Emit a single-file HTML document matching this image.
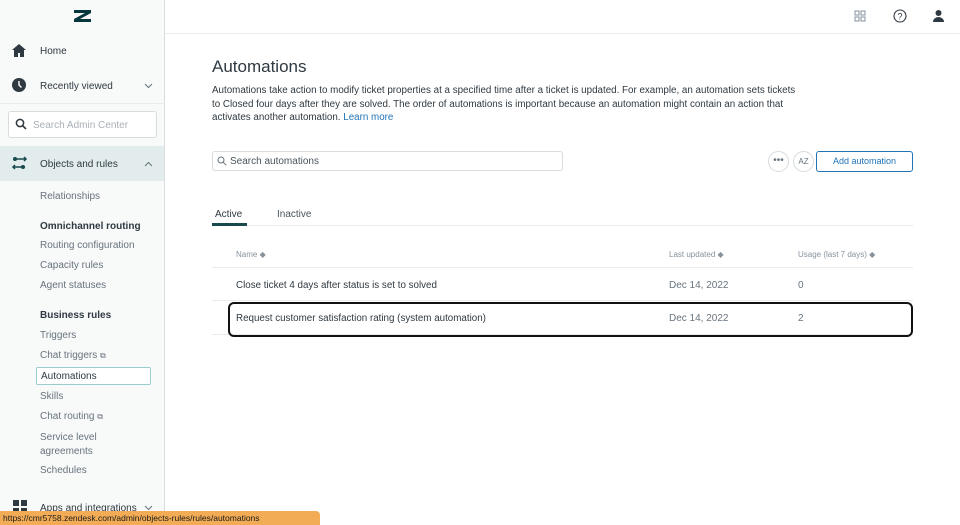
<!DOCTYPE html>
<html><head><meta charset="utf-8"><style>
*{margin:0;padding:0;box-sizing:border-box}
body{width:960px;height:525px;overflow:hidden;font-family:"Liberation Sans",sans-serif;background:#fff;color:#2f3941;position:relative}
.a{position:absolute}
#side{left:0;top:0;width:165px;height:525px;background:#f8f9f9;border-right:1px solid #d8dcde}
.nav{font-size:10px;color:#2f3941;position:absolute;left:40px}
.sub{font-size:10px;color:#68737d;position:absolute;left:40px}
.bold{font-weight:bold;color:#2f3941}
.t{font-size:10px}
.hdr{font-size:8px;color:#87929d}
</style></head><body>
<div id="side" class="a">
  <svg class="a" style="left:74px;top:10px" width="17" height="12" viewBox="0 0 17 12"><path d="M0 0h17v3L6 9h11v3H0V9L11 3H0z" fill="#03363d"/></svg>
  <svg class="a" style="left:12px;top:44px" width="14" height="13" viewBox="0 0 14 13"><path d="M7 0L0 6h2v7h4V9h2v4h4V6h2z" fill="#2f3941"/></svg>
  <div class="nav" style="top:46px">Home</div>
  <svg class="a" style="left:12px;top:78px" width="14" height="14" viewBox="0 0 14 14"><circle cx="7" cy="7" r="7" fill="#2f3941"/><path d="M7 3v4l2.5 2.5" stroke="#fff" stroke-width="1.4" fill="none"/></svg>
  <div class="nav" style="top:81px">Recently viewed</div>
  <svg class="a" style="left:144px;top:83px" width="9" height="6"><path d="M1 1l3.5 3.5L8 1" stroke="#68737d" fill="none"/></svg>
  <div class="a" style="left:0;top:103px;width:165px;height:1px;background:#e9ebed"></div>
  <div class="a" style="left:8px;top:111px;width:149px;height:27px;background:#fff;border:1px solid #d8dcde;border-radius:3px"></div>
  <svg class="a" style="left:15px;top:118px" width="12" height="12"><circle cx="5" cy="5" r="3.6" stroke="#2f3941" stroke-width="1.5" fill="none"/><path d="M7.5 7.5l3.5 3.5" stroke="#2f3941" stroke-width="1.6"/></svg>
  <div class="a" style="left:33px;top:120px;font-size:10px;color:#a8b0b7">Search Admin Center</div>
  <div class="a" style="left:0;top:146px;width:164px;height:35px;background:#e2ecec"></div>
  <svg class="a" style="left:11px;top:155px" width="17" height="16" viewBox="0 0 17 16"><g stroke="#17494d" stroke-width="1.5" fill="none"><path d="M3 4h12M13 2l2 2-2 2M14 12H2M4 10l-2 2 2 2"/></g><circle cx="4" cy="4" r="2" fill="#17494d"/><circle cx="12" cy="12" r="2" fill="#17494d"/></svg>
  <div class="nav" style="top:159px">Objects and rules</div>
  <svg class="a" style="left:144px;top:161px" width="9" height="6"><path d="M1 5l3.5-3.5L8 5" stroke="#68737d" fill="none"/></svg>
  <div class="sub" style="top:191px">Relationships</div>
  <div class="sub bold" style="top:221px">Omnichannel routing</div>
  <div class="sub" style="top:240px">Routing configuration</div>
  <div class="sub" style="top:260px">Capacity rules</div>
  <div class="sub" style="top:280px">Agent statuses</div>
  <div class="sub bold" style="top:310px">Business rules</div>
  <div class="sub" style="top:330px">Triggers</div>
  <div class="sub" style="top:350px">Chat triggers <span style="font-size:8px">⧉</span></div>
  <div class="a" style="left:36px;top:367px;width:115px;height:18px;background:#fff;border:1px solid #9ccbcf;border-radius:2px"></div>
  <div class="sub" style="top:371px;left:41px;color:#2f3941">Automations</div>
  <div class="sub" style="top:391px">Skills</div>
  <div class="sub" style="top:411px">Chat routing <span style="font-size:8px">⧉</span></div>
  <div class="sub" style="top:431px;line-height:14px">Service level<br>agreements</div>
  <div class="sub" style="top:465px">Schedules</div>
  <svg class="a" style="left:13px;top:500px" width="14" height="14"><rect x="0" y="0" width="6" height="6" fill="#2f3941"/><rect x="8" y="0" width="6" height="6" fill="#2f3941"/><rect x="0" y="8" width="6" height="6" fill="#2f3941"/><rect x="8" y="8" width="6" height="6" fill="#2f3941"/></svg>
  <div class="nav" style="top:503px">Apps and integrations</div>
  <svg class="a" style="left:144px;top:505px" width="9" height="6"><path d="M1 1l3.5 3.5L8 1" stroke="#68737d" fill="none"/></svg>
</div>
<div class="a" style="left:165px;top:33px;width:795px;height:1px;background:#e9ebed"></div>
<svg class="a" style="left:854px;top:10px" width="12" height="12"><g fill="none" stroke="#87929d" stroke-width="1"><rect x="1" y="1" width="4" height="4"/><rect x="7" y="1" width="4" height="4"/><rect x="1" y="7" width="4" height="4"/><rect x="7" y="7" width="4" height="4"/></g></svg>
<svg class="a" style="left:893px;top:9px" width="14" height="14"><circle cx="7" cy="7" r="6" stroke="#2f3941" stroke-width="1.1" fill="none"/><text x="7" y="10.5" font-size="9" text-anchor="middle" fill="#2f3941" font-family="Liberation Sans">?</text></svg>
<svg class="a" style="left:932px;top:9px" width="13" height="13"><circle cx="6.5" cy="4" r="3" fill="#2f3941"/><path d="M1 13a5.5 5 0 0 1 11 0z" fill="#2f3941"/></svg>
<div class="a" style="left:212px;top:57px;font-size:17px;color:#2f3941">Automations</div>
<div class="a t" style="left:212px;top:84px;white-space:nowrap;font-size:9.8px;line-height:13.7px;color:#2f3941">Automations take action to modify ticket properties at a specified time after a ticket is updated. For example, an automation sets tickets<br>to Closed four days after they are solved. The order of automations is important because an automation might contain an action that<br>activates another automation. <span style="color:#1f73b7">Learn more</span></div>
<div class="a" style="left:212px;top:151px;width:351px;height:20px;border:1px solid #d8dcde;border-radius:3px"></div>
<svg class="a" style="left:217px;top:156px" width="10" height="10"><circle cx="4" cy="4" r="3" stroke="#68737d" fill="none"/><path d="M6.3 6.3l3 3" stroke="#68737d"/></svg>
<div class="a t" style="left:230px;top:156px;color:#49545c">Search automations</div>
<div class="a" style="left:768px;top:151px;width:21px;height:21px;border:1px solid #d8dcde;border-radius:50%;text-align:center;font-size:10px;line-height:17px;color:#68737d">•••</div>
<div class="a" style="left:793px;top:151px;width:21px;height:21px;border:1px solid #d8dcde;border-radius:50%;text-align:center;font-size:8px;line-height:19px;color:#68737d">AZ</div>
<div class="a" style="left:816px;top:151px;width:97px;height:21px;border:1px solid #1f73b7;border-radius:3px;text-align:center;font-size:9px;line-height:19px;color:#1f73b7">Add automation</div>
<div class="a t" style="left:215px;top:209px;color:#2f3941">Active</div>
<div class="a t" style="left:277px;top:209px;color:#49545c">Inactive</div>
<div class="a" style="left:212px;top:225px;width:701px;height:1px;background:#e9ebed"></div>
<div class="a" style="left:212px;top:223px;width:35px;height:3px;background:#17494d"></div>
<div class="a hdr" style="left:236px;top:250px">Name ◆</div>
<div class="a hdr" style="left:669px;top:250px">Last updated ◆</div>
<div class="a hdr" style="left:798px;top:250px">Usage (last 7 days) ◆</div>
<div class="a" style="left:212px;top:267px;width:701px;height:1px;background:#e9ebed"></div>
<div class="a t" style="left:236px;top:280px;font-size:9.8px">Close ticket 4 days after status is set to solved</div>
<div class="a t" style="left:669px;top:280px;color:#68737d">Dec 14, 2022</div>
<div class="a t" style="left:798px;top:280px;color:#68737d">0</div>
<div class="a" style="left:212px;top:300px;width:701px;height:1px;background:#e9ebed"></div>
<div class="a t" style="left:236px;top:313px;font-size:9.8px">Request customer satisfaction rating (system automation)</div>
<div class="a t" style="left:669px;top:313px;color:#68737d">Dec 14, 2022</div>
<div class="a t" style="left:798px;top:313px;color:#68737d">2</div>
<div class="a" style="left:212px;top:334px;width:701px;height:1px;background:#e9ebed"></div>
<div class="a" style="left:228px;top:302px;width:685px;height:35px;border:2px solid #111;border-radius:6px"></div>
<div class="a" style="left:0;top:511px;width:320px;height:14px;background:#f2ac55;border-radius:0 4px 0 0;font-size:8.5px;line-height:14px;padding-left:3px;color:#1a1a1a">https://cmr5758.zendesk.com/admin/objects-rules/rules/automations</div>
</body></html>
